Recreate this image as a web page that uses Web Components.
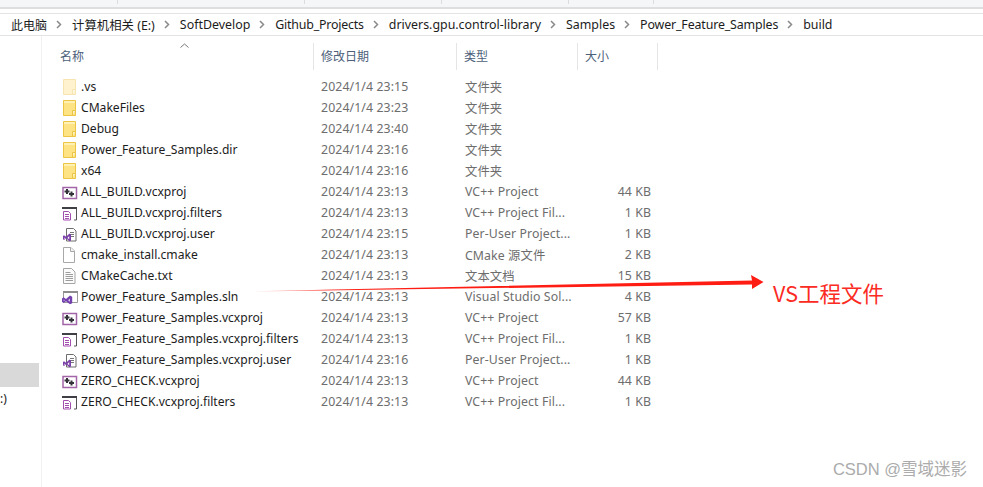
<!DOCTYPE html>
<html lang="zh">
<head>
<meta charset="utf-8">
<title>build</title>
<style>
html,body{margin:0;padding:0;background:#fff}
body{font:12px "Noto Sans","Noto Sans CJK SC",sans-serif;width:983px;height:487px;overflow:hidden}
</style>
</head>
<body>
<explorer-window></explorer-window>
<script>
const ICONS = {
  folder:`<path d="M1.500.5h12v15h-12z" fill="#fde383" stroke="#edc544"/><path d="M2 1h11v2H2z" fill="#fff0b4"/><path d="M10.500 15.500v-5h3" fill="#fff2c4" stroke="#edc544"/>`,
  folderfade:`<path d="M1.500.5h12v15h-12z" fill="#fff3cf" stroke="#f6e5b0"/><path d="M10.500 15.500v-5h3" fill="#fff8e3" stroke="#f6e5b0"/>`,
  proj:`<rect x="1" y="3.500" width="13.500" height="11" fill="#fff" stroke="#a265a8" stroke-width="1.500"/><path d="M4 5h2v1.500h1.500v2H6V10H4V8.500H2.500v-2H4zM8.500 7.500h2V9H12v2h-1.500v1.500h-2V11H7V9h1.500z" fill="#33333a"/>`,
  filters:`<path d="M0 2h15v2H0z" fill="#3f3f46"/><path d="M14.500 4v11H12" fill="none" stroke="#555"/><path d="M1.500 6.500h5l2 2v6.500h-7z" fill="#fff" stroke="#a24fb0"/><path d="M3 9.500h4M3 11.500h4M3 13.500h4" stroke="#a24fb0"/>`,
  user:`<path d="M4.500 2.500h7l2.500 2.500v10h-9.500z" fill="#fff" stroke="#6d6d6d"/><path d="M8 6.500h4M8 8.500h4M9 10.500h3" stroke="#777"/><path d="M1 10l1-.7 2 1.500L7.500 7.500 9 8.500v6l-1.500.8-3.500-3-2 1.600-1-.7z" fill="#7a3fa8"/><path d="M2.300 11.500v1.500l1-.7zM7.200 10l-1.700 1.900 1.700 1.400z" fill="#fff"/>`,
  blank:`<path d="M1.500.5h7.500l3.500 3.500v11.500h-11z" fill="#fff" stroke="#a8a8a8"/><path d="M8.500.5v4h4" fill="#f2f2f2" stroke="#a8a8a8"/>`,
  text:`<path d="M1.500.5h8l3.500 3.500v11.500h-11.500z" fill="#fbfbfb" stroke="#a4a4a4"/><path d="M3.500 4.500h5M3.500 6.500h7.500M3.500 8.500h7.500M3.500 10.500h7.500M3.500 12.500h7.500" stroke="#9c9c9c"/>`,
  sln:`<path d="M1.500 2.500h14v11h-14z" fill="#fff" stroke="#9a9a9a"/><path d="M1 2h15v2H1z" fill="#8d8d8d"/><path d="M0 9.500l1.500-1.200 2.500 1.700 4-3.500 2.200 1.200v6.600l-2.200 1-4-3-2.500 1.700L0 12.800z" fill="#7340ae"/><path d="M1.700 10.200v2l1.200-1zM8 9.500l-2 1.700 2 1.600z" fill="#d9c7ee"/>`
};
const DATA = [
  ['folderfade','.vs','2024/1/4 23:15','文件夹',''],
  ['folder','CMakeFiles','2024/1/4 23:23','文件夹',''],
  ['folder','Debug','2024/1/4 23:40','文件夹',''],
  ['folder','Power_Feature_Samples.dir','2024/1/4 23:16','文件夹',''],
  ['folder','x64','2024/1/4 23:16','文件夹',''],
  ['proj','ALL_BUILD.vcxproj','2024/1/4 23:13','VC++ Project','44 KB'],
  ['filters','ALL_BUILD.vcxproj.filters','2024/1/4 23:13','VC++ Project Fil...','1 KB'],
  ['user','ALL_BUILD.vcxproj.user','2024/1/4 23:15','Per-User Project...','1 KB'],
  ['blank','cmake_install.cmake','2024/1/4 23:13','CMake 源文件','2 KB'],
  ['text','CMakeCache.txt','2024/1/4 23:13','文本文档','15 KB'],
  ['sln','Power_Feature_Samples.sln','2024/1/4 23:13','Visual Studio Sol...','4 KB'],
  ['proj','Power_Feature_Samples.vcxproj','2024/1/4 23:13','VC++ Project','57 KB'],
  ['filters','Power_Feature_Samples.vcxproj.filters','2024/1/4 23:13','VC++ Project Fil...','1 KB'],
  ['user','Power_Feature_Samples.vcxproj.user','2024/1/4 23:16','Per-User Project...','1 KB'],
  ['proj','ZERO_CHECK.vcxproj','2024/1/4 23:13','VC++ Project','44 KB'],
  ['filters','ZERO_CHECK.vcxproj.filters','2024/1/4 23:13','VC++ Project Fil...','1 KB']
];
const CRUMBS = [['此电脑','font-size:12px'],['计算机相关 (E:)',''],['SoftDevelop',''],['Github_Projects','letter-spacing:-.2px'],['drivers.gpu.control-library',''],['Samples',''],['Power_Feature_Samples','letter-spacing:-.14px'],['build','']];
const FONT = `"Noto Sans","Noto Sans CJK SC",sans-serif`;
function define(name, css, html){
  customElements.define(name, class extends HTMLElement{
    constructor(){super();this.attachShadow({mode:'open'});}
    connectedCallback(){
      this.shadowRoot.innerHTML=`<style>${css}</style>`+(typeof html==='function'?html(this):html);
    }
  });
}
define('file-icon',`:host{display:block;width:16px;height:16px}svg{display:block}`,
  h=>`<svg width="16" height="16" viewBox="0 0 16 16">${ICONS[h.getAttribute('kind')]}</svg>`);

define('ribbon-strip',`
  :host{display:grid;grid-template-columns:118px 187px 137px 127px 85px 1fr;height:7px;background:#f5f6f7;border-bottom:2px solid #dedede;overflow:hidden}
  div{height:4px;border-right:1px solid #dcdcdc;overflow:hidden;font-size:12px;color:#444}
  div:last-of-type{border:0}
  span{display:block;margin-top:-15px;line-height:17px;white-space:nowrap}
`,`<div><span style="margin-left:-16px">查看</span></div>
<div><span style="margin-left:81px">组织</span></div>
<div><span style="margin-left:57px">新建</span></div>
<div><span style="margin-left:51px">打开</span></div>
<div><span style="margin-left:30px">选择</span></div><div></div>`);

define('crumb-bar',`
  :host{display:flex;align-items:center;height:21px;margin-top:4px;border-top:1px solid #e3e3e3;border-bottom:1px solid #e3e3e3;padding-left:11px;font:12.4px ${FONT};color:#1c1c1c;white-space:nowrap}
  svg{margin:0 10px 0 9px;flex:none}
`,()=>CRUMBS.map((c,i,a)=>`<span style="${c[1]}">${c[0]}</span>`+(i<a.length-1?`<svg width="6" height="9" viewBox="0 0 6 9"><path d="M1 1l3.500 3.500L1 8" fill="none" stroke="#8a8a8a" stroke-width="1.500"/></svg>`:'')).join(''));

define('side-pane',`
  :host{display:flex;flex-direction:column;width:41px;border-right:1px solid #f0f0f0;font:12px ${FONT};overflow:hidden;flex:none}
  .sel{height:24px;width:39px;margin-top:327px;background:#d9d9d9}
  .drive{height:24px;line-height:24px;color:#1c1c1c;white-space:nowrap}
`,`<div class="sel"></div><div class="drive">:)</div>`);

define('list-header',`
  :host{display:grid;grid-template-columns:272px 143px 121px 80px;height:27px;margin-top:7px;font:12px ${FONT};color:#4c607a;position:relative;width:616px}
  div{border-right:1px solid #e5e5e5;padding-left:7px;line-height:27px;box-sizing:border-box;height:27px}
  div.first{padding-left:18px}
  svg{position:absolute;left:138px;top:0}
`,`<div class="first">名称</div><div>修改日期</div><div>类型</div><div>大小</div>
<svg width="9" height="6" viewBox="0 0 9 6"><path d="M.5 4.500l4-3.500 4 3.500" fill="none" stroke="#777"/></svg>`);

define('file-row',`
  :host{display:grid;grid-template-columns:279px 144px 143px 43px;height:21px;align-items:center;font:12.3px ${FONT};letter-spacing:.1px;white-space:nowrap;color:#6d6d6d}
  .n{display:flex;align-items:center;gap:3px;color:#1c1c1c;padding-left:20px;font-size:12.1px;letter-spacing:0}
  .s{text-align:right}
`,h=>`<div class="n"><file-icon kind="${h.dataset.k}"></file-icon><span>${h.dataset.n}</span></div><div>${h.dataset.d}</div><div>${h.dataset.t}</div><div class="s">${h.dataset.s}</div>`);

define('file-list',`
  :host{display:block;flex:1;min-width:0}
  .rows{margin-top:6px}
`,()=>`<list-header></list-header><div class="rows">${DATA.map(r=>`<file-row data-k="${r[0]}" data-n="${r[1]}" data-d="${r[2]}" data-t="${r[3]}" data-s="${r[4]}"></file-row>`).join('')}</div>`);

define('call-out',`
  :host{position:absolute;left:0;top:0;width:983px;height:487px;pointer-events:none}
  svg{position:absolute;left:0;top:0}
  .label{position:absolute;left:773px;top:278px;font:21.500px/30px "Noto Sans CJK SC",sans-serif;color:#fb2a22;white-space:nowrap}
  .mark{position:absolute;right:16px;top:457px;font:16.500px/24px "Liberation Sans","Noto Sans CJK SC",sans-serif;color:#ababab;white-space:nowrap}
`,`<svg width="983" height="487" viewBox="0 0 983 487">
  <defs><linearGradient id="g" gradientUnits="userSpaceOnUse" x1="248" y1="291" x2="330" y2="290"><stop offset="0" stop-color="#ff1c12" stop-opacity="0"/><stop offset="1" stop-color="#ff1c12"/></linearGradient></defs>
  <path d="M248 291.500L752 280.500L751 275L763.500 282L752 289L752 284.500Z" fill="url(#g)"/>
</svg>
<div class="label">VS工程文件</div>
<div class="mark">CSDN @雪域迷影</div>`);

define('explorer-window',`
  :host{display:block;position:relative;width:983px;height:487px;background:#fff;overflow:hidden}
  .main{display:flex;height:451px}
`,`<ribbon-strip></ribbon-strip><crumb-bar></crumb-bar><div class="main"><side-pane></side-pane><file-list></file-list></div><call-out></call-out>`);
</script>
</body>
</html>
